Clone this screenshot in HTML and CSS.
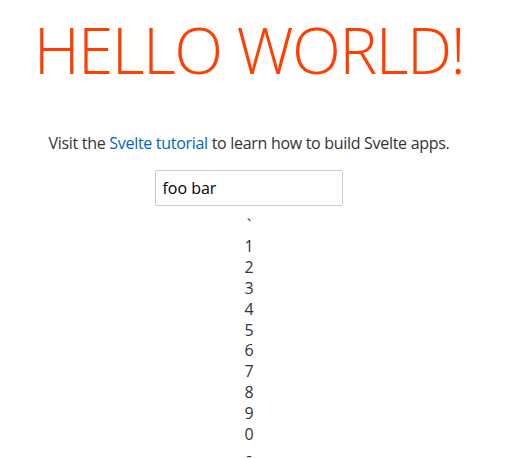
FILE: index.html
```html
<!DOCTYPE html>
<html lang="en">
<head>
    <meta charset="UTF-8">
    <meta name="viewport" content="width=device-width, initial-scale=1.0">
    <title>Svelte app</title>
    <link rel="stylesheet" href="styles.css">
</head>
<body>
    <main>
        <h1>Hello world!</h1>
        <p>Visit the <a href="#">Svelte tutorial</a> to learn how to build Svelte apps.</p>
        <input type="text" value="foo bar">
        <div class="keys">
            <div>`</div>
            <div>1</div>
            <div>2</div>
            <div>3</div>
            <div>4</div>
            <div>5</div>
            <div>6</div>
            <div>7</div>
            <div>8</div>
            <div>9</div>
            <div>0</div>
            <div>-</div>
            <div>=</div>
            <div>q</div>
            <div>w</div>
            <div>e</div>
        </div>
    </main>
</body>
</html>
```

FILE: styles.css
```css
html {
    overflow: hidden;
}

body {
    margin: 0;
    padding: 0 18px 0 8px;
    color: #333;
    font-family: "Open Sans", "Noto Sans", sans-serif;
    font-size: 16px;
    line-height: 21px;
}

main {
    text-align: center;
}

h1 {
    color: #ff3e00;
    text-transform: uppercase;
    font-size: 64px;
    font-weight: 100;
    line-height: 85px;
    letter-spacing: -1.6px;
    margin: 7px 0 41px;
}

p {
    margin: 0 0 16px;
    letter-spacing: -0.3px;
}

a {
    color: rgb(0, 100, 200);
    text-decoration: none;
}

input {
    font-family: inherit;
    font-size: inherit;
    color: #000;
    width: 188px;
    height: 36px;
    padding: 0.4em;
    margin: 0 0 9px;
    box-sizing: border-box;
    border: 1px solid #ccc;
    border-radius: 2px;
}

.keys {
    line-height: 20.9px;
}
```
